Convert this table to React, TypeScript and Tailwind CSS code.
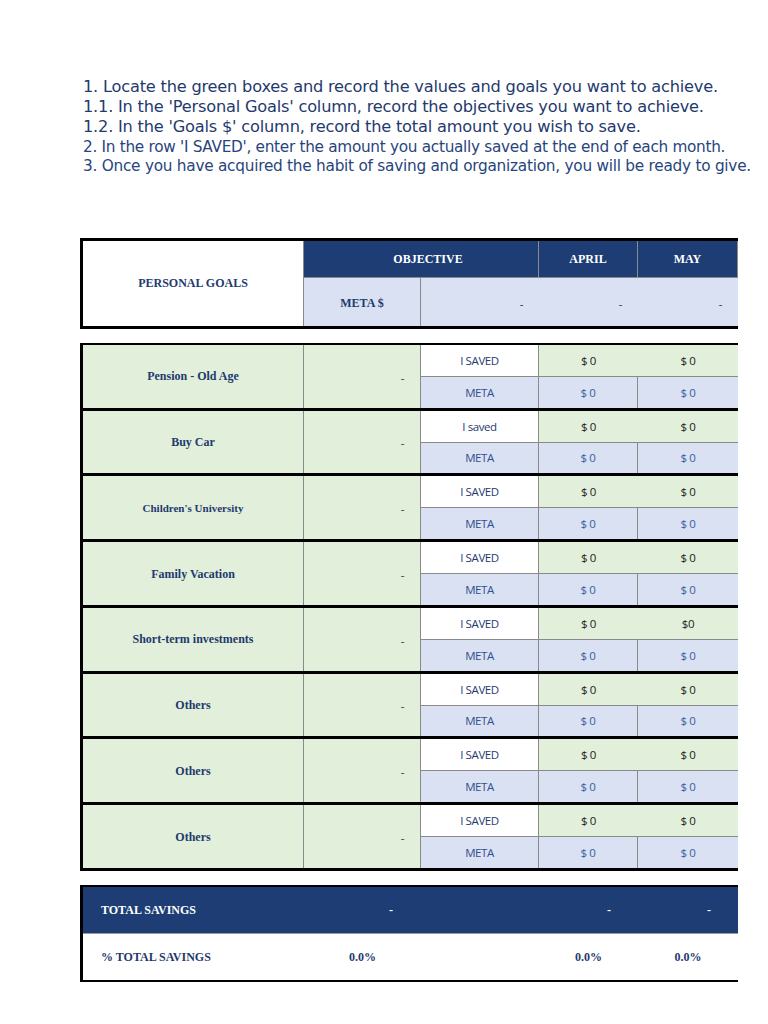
import React from 'react';

const goals = [
	{ label: "Pension - Old Age", saved: "I SAVED", small: false, may: "$ 0" },
	{ label: "Buy Car", saved: "I saved", small: false, may: "$ 0" },
	{ label: "Children's University", saved: "I SAVED", small: true, may: "$ 0" },
	{ label: "Family Vacation", saved: "I SAVED", small: false, may: "$ 0" },
	{ label: "Short-term investments", saved: "I SAVED", small: false, may: "$0" },
	{ label: "Others", saved: "I SAVED", small: false, may: "$ 0" },
	{ label: "Others", saved: "I SAVED", small: false, may: "$ 0" },
	{ label: "Others", saved: "I SAVED", small: false, may: "$ 0" },
];

const serif = "font-['Liberation_Serif',serif] font-bold";
const cellFont = "font-['Open_Sans',sans-serif] text-[11.5px] tracking-[-0.4px]";
const cols = "grid grid-cols-[221px_117px_118px_99px_100px]";

const GoalRow: React.FC<{ goal: typeof goals[number] }> = ({ goal }) => {
	return (
		<div className={`${cols} grid-rows-[32px_30.75px] border-b-[3px] border-black`}>
			<div className={`row-span-2 bg-[#e2efda] border-r border-[#8a8a8a] flex items-center justify-center text-[#1f3a6e] ${serif} ${goal.small ? "text-[11px]" : "text-[12px]"}`}>
				{goal.label}
			</div>
			<div className={`row-span-2 bg-[#e2efda] border-r border-[#8a8a8a] flex items-center justify-end pr-[16px] pt-[2px] text-[#333] ${cellFont}`}>
				-
			</div>
			<div className={`bg-white border-r border-b border-[#8a8a8a] flex items-center justify-center text-[#1f3a6e] ${cellFont}`}>
				{goal.saved}
			</div>
			<div className={`bg-[#e2efda] border-b border-[#8a8a8a] flex items-center justify-center text-[#222] ${cellFont}`}>
				$ 0
			</div>
			<div className={`bg-[#e2efda] border-b border-[#8a8a8a] flex items-center justify-center text-[#222] ${cellFont}`}>
				{goal.may}
			</div>
			<div className={`bg-[#d9e1f2] border-r border-[#8a8a8a] flex items-center justify-center text-[#2f4f8f] ${cellFont}`}>
				META
			</div>
			<div className={`bg-[#d9e1f2] border-r border-[#8a8a8a] flex items-center justify-center text-[#3a5ea0] ${cellFont}`}>
				$ 0
			</div>
			<div className={`bg-[#d9e1f2] flex items-center justify-center text-[#3a5ea0] ${cellFont}`}>
				$ 0
			</div>
		</div>
	)
}

const App: React.FC = () => {
	return (
		<div className="w-[768px] h-[1024px] bg-white overflow-hidden">
			<div className="pt-[77px] pl-[83px] font-['DejaVu_Sans',sans-serif] text-[#1f3a6e] leading-[19.6px] whitespace-nowrap">
				<div className="text-[16.2px] tracking-[-0.2px]">1. Locate the green boxes and record the values and goals you want to achieve.</div>
				<div className="text-[16.2px] tracking-[-0.2px]">1.1. In the 'Personal Goals' column, record the objectives you want to achieve.</div>
				<div className="text-[16.2px] tracking-[-0.2px] pt-[1px]">1.2. In the 'Goals $' column, record the total amount you wish to save.</div>
				<div className="text-[15.3px] tracking-[-0.3px] text-[#27457d] pt-[1px]">2. In the row 'I SAVED', enter the amount you actually saved at the end of each month.</div>
				<div className="text-[15.3px] tracking-[-0.25px] text-[#27457d]">3. Once you have acquired the habit of saving and organization, you will be ready to give.</div>
			</div>

			<div className="ml-[80px] w-[658px] mt-[61px]">
				{/* header */}
				<div className={`${cols} grid-rows-[37px_48px] border-t-[3px] border-b-[3px] border-l-[3px] border-black`}>
					<div className={`row-span-2 bg-white border-r border-[#8a8a8a] flex items-center justify-center text-[12px] text-[#1f3a6e] ${serif}`}>
						PERSONAL GOALS
					</div>
					<div className={`col-span-2 bg-[#1d3d74] border-r border-b border-[#8a8a8a] flex items-center justify-center pl-[14px] text-[12px] text-white ${serif}`}>
						OBJECTIVE
					</div>
					<div className={`bg-[#1d3d74] border-r border-b border-[#8a8a8a] flex items-center justify-center text-[12px] text-white ${serif}`}>
						APRIL
					</div>
					<div className={`bg-[#1d3d74] border-r border-b border-[#8a8a8a] flex items-center justify-center text-[12px] text-white ${serif}`}>
						MAY
					</div>
					<div className={`bg-[#d9e1f2] border-r border-[#8a8a8a] flex items-center justify-center pt-[2px] text-[12px] text-[#1f3a6e] ${serif}`}>
						META $
					</div>
					<div className={`bg-[#d9e1f2] flex items-center justify-end pr-[16px] pt-[4px] text-[#333] ${cellFont}`}>-</div>
					<div className={`bg-[#d9e1f2] flex items-center justify-end pr-[16px] pt-[4px] text-[#333] ${cellFont}`}>-</div>
					<div className={`bg-[#d9e1f2] flex items-center justify-end pr-[16px] pt-[4px] text-[#333] ${cellFont}`}>-</div>
				</div>

				{/* goals */}
				<div className="mt-[14px] border-t-[2px] border-l-[3px] border-black">
					{goals.map((goal, index) => <GoalRow goal={goal} key={index} />)}
				</div>

				{/* totals */}
				<div className="mt-[14px] border-t-[2px] border-l-[3px] border-b-[2px] border-black">
					<div className={`${cols} h-[46px] bg-[#1d3d74] text-white ${serif} text-[12px]`}>
						<div className="flex items-center pl-[18px]">TOTAL SAVINGS</div>
						<div className="col-span-2 flex items-center pl-[85px]">-</div>
						<div className="flex items-center justify-end pr-[27px]">-</div>
						<div className="flex items-center justify-end pr-[27px]">-</div>
					</div>
					<div className={`${cols} h-[47px] bg-white border-t border-[#9a9a9a] text-[#1f3a6e] ${serif} text-[12px]`}>
						<div className="flex items-center pl-[18px]">% TOTAL SAVINGS</div>
						<div className="flex items-center justify-center">0.0%</div>
						<div></div>
						<div className="flex items-center justify-center">0.0%</div>
						<div className="flex items-center justify-center">0.0%</div>
					</div>
				</div>
			</div>
		</div>
	)
}
export default App;
